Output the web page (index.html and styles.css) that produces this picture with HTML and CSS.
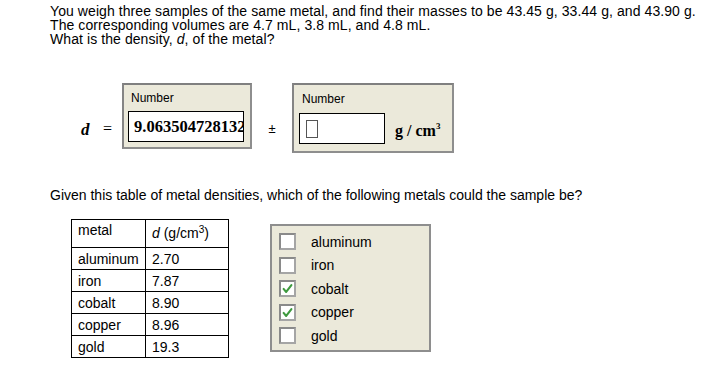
FILE: index.html
```html
<!DOCTYPE html>
<html>
<head>
<meta charset="utf-8">
<link rel="stylesheet" href="styles.css">
</head>
<body>
<div class="page">
  <div class="question">
    <div>You weigh three samples of the same metal, and find their masses to be 43.45 g, 33.44 g, and 43.90 g.</div>
    <div>The corresponding volumes are 4.7 mL, 3.8 mL, and 4.8 mL.</div>
    <div>What is the density, <i>d</i>, of the metal?</div>
  </div>

  <div class="answer-row">
    <span class="var">d</span>
    <span class="eq">=</span>
    <div class="numbox box1">
      <div class="numlabel">Number</div>
      <div class="numinput wide">9.063504728132</div>
    </div>
    <span class="pm">±</span>
    <div class="numbox box2">
      <div class="numlabel">Number</div>
      <div class="unitrow">
        <div class="numinput narrow"><span class="caret"></span></div>
        <span class="unit">g / cm<sup>3</sup></span>
      </div>
    </div>
  </div>

  <div class="prompt2">Given this table of metal densities, which of the following metals could the sample be?</div>

  <div class="bottom-row">
    <table class="dens">
      <tr class="head"><td class="h1">metal</td><td class="h2"><i>d</i> (g/cm<sup>3</sup>)</td></tr>
      <tr><td>aluminum</td><td>2.70</td></tr>
      <tr><td>iron</td><td>7.87</td></tr>
      <tr><td>cobalt</td><td>8.90</td></tr>
      <tr><td>copper</td><td>8.96</td></tr>
      <tr><td>gold</td><td>19.3</td></tr>
    </table>

    <div class="choices">
      <div class="choice"><span class="cb"></span><span>aluminum</span></div>
      <div class="choice"><span class="cb"></span><span>iron</span></div>
      <div class="choice"><span class="cb"><svg viewBox="0 0 15 15" width="15" height="15"><path d="M3 8 L6 11.5 L12 3.5" fill="none" stroke="#3f9a3f" stroke-width="2.4" stroke-linecap="round" stroke-linejoin="round"/></svg></span><span>cobalt</span></div>
      <div class="choice"><span class="cb"><svg viewBox="0 0 15 15" width="15" height="15"><path d="M3 8 L6 11.5 L12 3.5" fill="none" stroke="#3f9a3f" stroke-width="2.4" stroke-linecap="round" stroke-linejoin="round"/></svg></span><span>copper</span></div>
      <div class="choice"><span class="cb"></span><span>gold</span></div>
    </div>
  </div>
</div>
</body>
</html>
```

FILE: styles.css
```css
html, body {
  margin: 0;
  padding: 0;
  background: #ffffff;
}
body {
  font-family: "Liberation Sans", Arial, sans-serif;
  font-size: 14px;
  color: #000;
}
.page {
  padding: 4px 0 0 50px;
}
.question {
  line-height: 14px;
  letter-spacing: 0.08px;
}
.answer-row {
  display: flex;
  align-items: flex-start;
  margin-top: 37px;
  margin-left: 31px;
  height: 70px;
}
.var {
  font-family: "Liberation Serif", "Times New Roman", serif;
  font-style: italic;
  font-weight: bold;
  font-size: 17px;
  line-height: 17px;
  margin-top: 38px;
  width: 22px;
}
.eq {
  font-family: "Liberation Serif", "Times New Roman", serif;
  font-size: 16px;
  line-height: 16px;
  margin-top: 38px;
  width: 19px;
}
.numbox {
  background: #ebe9da;
  border: 2px solid #8e8e8e;
  border-top-color: #7f7f7f;
  border-left-color: #858585;
  box-sizing: border-box;
}
.box1 {
  width: 130px;
  height: 66px;
  padding: 6px 0 0 4px;
}
.box2 {
  width: 162px;
  height: 70px;
  padding: 7px 0 0 5px;
}
.numlabel {
  font-size: 12px;
  line-height: 14px;
  padding-left: 3px;
  height: 14px;
}
.box1 .numlabel { margin-bottom: 6px; }
.box2 .numlabel { margin-bottom: 7px; }
.numinput {
  background: #fff;
  border: 1px solid #000;
  box-sizing: border-box;
  height: 31px;
  overflow: hidden;
  white-space: nowrap;
}
.wide {
  width: 116px;
  font-family: "Liberation Serif", "Times New Roman", serif;
  font-weight: bold;
  font-size: 16.5px;
  line-height: 29px;
  padding-left: 5px;
}
.narrow {
  width: 86px;
  display: flex;
  align-items: center;
  padding-left: 6px;
}
.caret {
  display: block;
  width: 12px;
  height: 18px;
  border: 1px solid #555;
  box-sizing: border-box;
}
.pm {
  width: 40px;
  text-align: center;
  margin-top: 39px;
  line-height: 13px;
  font-size: 13px;
}
.unitrow {
  display: flex;
  align-items: center;
}
.unit {
  font-family: "Liberation Serif", "Times New Roman", serif;
  font-weight: bold;
  font-size: 16px;
  margin-left: 10px;
  line-height: 16px;
  margin-top: 4px;
}
.unit sup {
  font-size: 9px;
  vertical-align: 7px;
  line-height: 0;
}
.prompt2 {
  margin-top: 35px;
  line-height: 15px;
}
.bottom-row {
  display: flex;
  align-items: flex-start;
  margin-top: 16px;
  margin-left: 21px;
}
.dens {
  border-collapse: collapse;
  border: 1px solid #000;
}
.dens td {
  border: 1px solid #000;
  padding: 0 6px;
  height: 21px;
  line-height: 16px;
  vertical-align: middle;
}
.dens td:first-child { width: 61px; }
.dens td:last-child { width: 70px; }
.dens .head td {
  height: 22px;
  vertical-align: top;
}
.dens .h1 { padding-top: 2px; }
.dens .h2 { padding-top: 5px; }
.dens sup {
  font-size: 10px;
  vertical-align: 5px;
  line-height: 0;
}
.choices {
  margin-left: 41px;
  margin-top: 5px;
  width: 161px;
  height: 128px;
  box-sizing: border-box;
  background: #ebe9da;
  border: 2px solid #8e8e8e;
  padding: 4px 0 0 7px;
}
.choice {
  display: flex;
  align-items: center;
  height: 23.5px;
}
.cb {
  width: 17px;
  height: 17px;
  box-sizing: border-box;
  background: #fff;
  border: 2px solid #999;
  border-color: #8a8a8a #a5a5a5 #a5a5a5 #8a8a8a;
  margin-right: 15px;
  display: flex;
  align-items: center;
  justify-content: center;
}
.cb svg { display: block; }
```
